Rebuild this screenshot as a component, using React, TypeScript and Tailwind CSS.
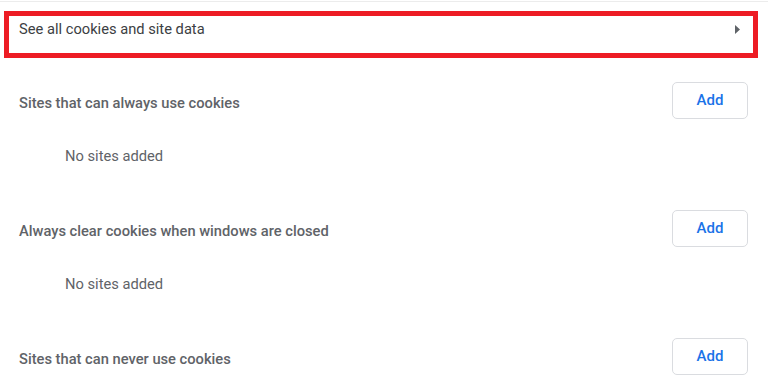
import React from "react";

function Section({ title, showEmpty = true }: { title: string; showEmpty?: boolean }) {
  return (
    <div className="mb-[16px]">
      <div className="flex h-[52px] items-center justify-between pl-[19px] pr-[20px]">
        <span className="pt-[7px] text-[14.7px] font-medium text-[#5f6368]">{title}</span>
        <button className="flex h-[37px] w-[76px] items-center justify-center rounded-[5px] border border-[#dadce0] bg-white text-[15px] font-medium text-[#1a73e8]">
          Add
        </button>
      </div>
      {showEmpty && (
        <div className="flex h-[60px] items-center pl-[65px] text-[14.7px] text-[#5f6368]">
          No sites added
        </div>
      )}
    </div>
  );
}

export default function App() {
  return (
    <div
      className="h-[389px] w-[768px] overflow-hidden bg-white"
      style={{ fontFamily: "Roboto, 'Noto Sans', sans-serif" }}
    >
      <div className="h-[1px]" />
      <div className="h-[1px] bg-[#ececec]" />
      <div className="h-[9px]" />
      <div className="ml-[4px] h-[47px] w-[754px] border-[5px] border-[#ed1c24]">
        <div className="flex h-[27px] items-center justify-between pl-[10px] pr-[13px]">
          <span className="text-[14.7px] text-[#3c4043]">See all cookies and site data</span>
          <svg width="5" height="9" viewBox="0 0 5 9">
            <path d="M0 0 L5 4.5 L0 9 Z" fill="#5f6368" />
          </svg>
        </div>
      </div>
      <div className="h-[16px]" />
      <Section title="Sites that can always use cookies" />
      <Section title="Always clear cookies when windows are closed" />
      <Section title="Sites that can never use cookies" showEmpty={false} />
    </div>
  );
}
